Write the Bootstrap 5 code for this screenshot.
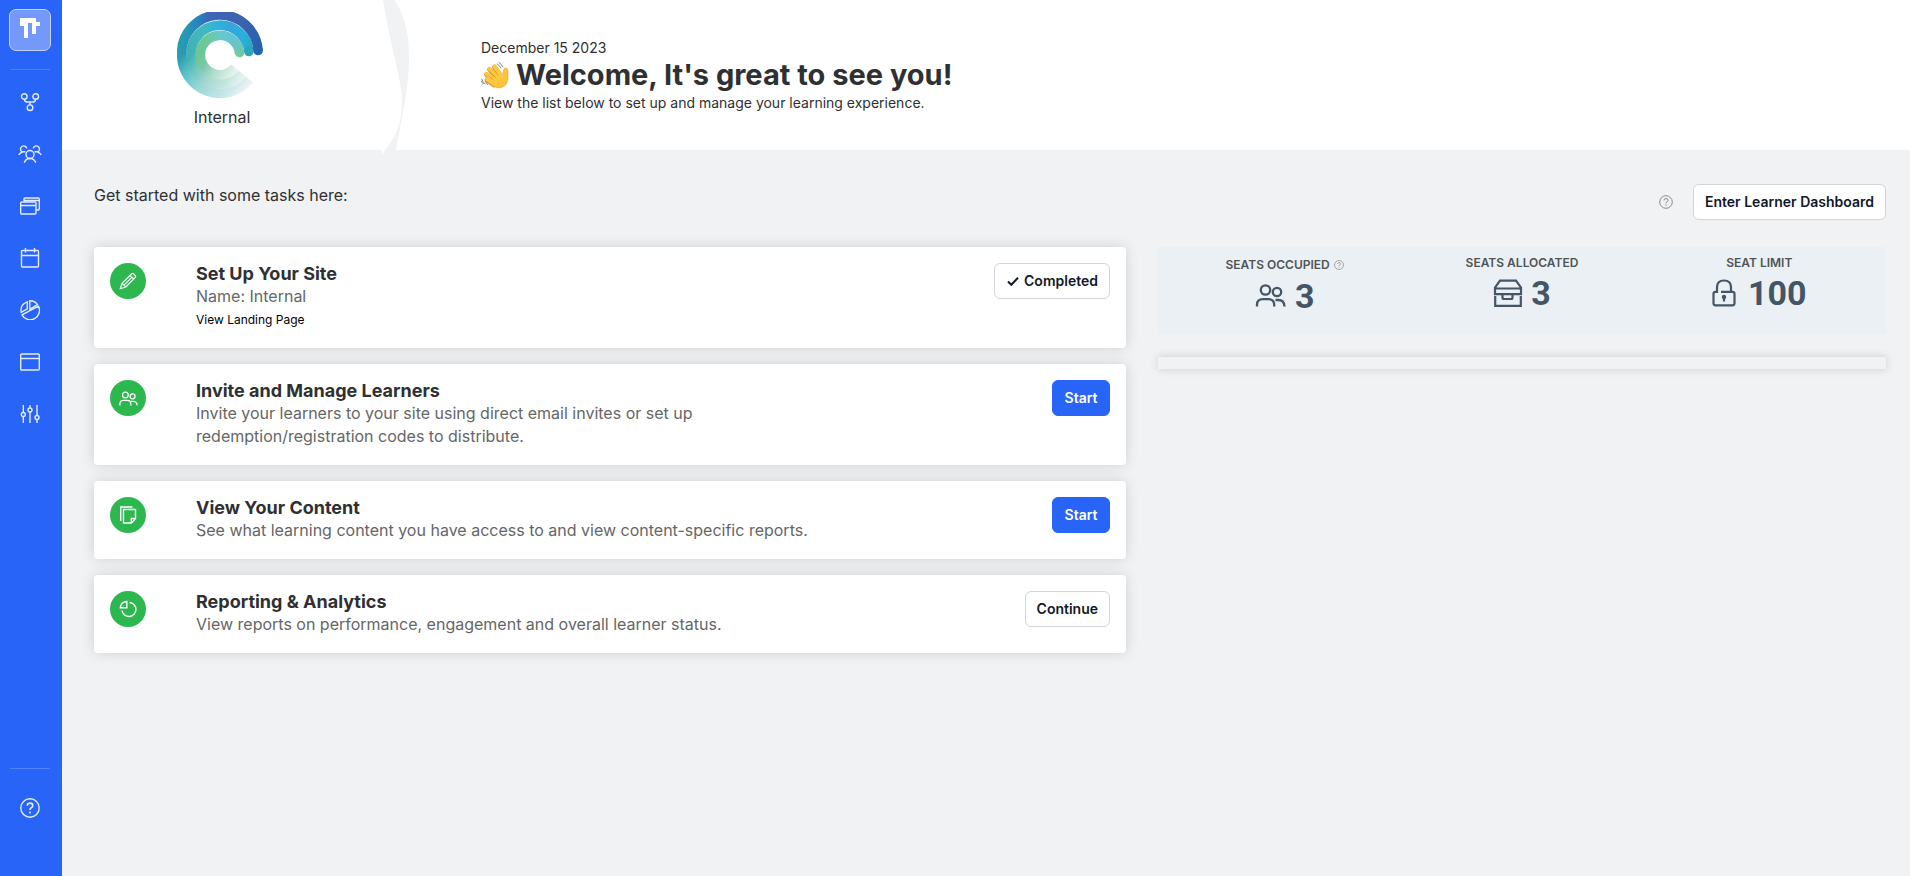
<!DOCTYPE html>
<html lang="en">
<head>
<meta charset="utf-8">
<meta name="viewport" content="width=device-width, initial-scale=1">
<title>Internal</title>
<link href="https://cdn.jsdelivr.net/npm/bootstrap@5.3.0/dist/css/bootstrap.min.css" rel="stylesheet">
<style>
  :root { --brand: #2864f8; --ink: #2f3032; --page: #f0f2f4; }
  body { background: var(--page); color: var(--ink); font-family: Inter, "Liberation Sans", sans-serif; }
  svg { display: block; flex: none; }
  .line-icon { fill: none; stroke: currentColor; stroke-width: 1.4; }
  .side-rail { width: 62px; background: var(--brand); padding: 9px 2px 42px 0; }
  .rail-rule { width: 40px; height: 1px; background: #5082fa; }
  .rail-link { color: #e4ecff; width: 40px; height: 52px; }
  .rail-top { padding-top: 6px; }
  .rail-bottom .rail-rule { margin-bottom: 13px; }
  .brand-tile { width: 42px; height: 42px; margin-bottom: 18px; padding-bottom: 4px; border: 1px solid #c3d3fd; border-radius: 7px; background: #7399fa; }
  .hero { height: 150px; }
  .hero-brand { width: 320px; padding-top: 12px; }
  .hero-name { margin-top: 7px; }
  .hero-copy { padding: 39px 0 0 71px; font-size: 14px; line-height: 17px; }
  .hero-copy h1 { font-size: 29px; line-height: 38px; font-weight: 700; gap: 6px; }
  .page-main { padding: 34px 24px 24px 32px; }
  .intro-bar { margin-bottom: 27px; }
  .intro { line-height: 23px; }
  .row-wide { --bs-gutter-x: 32px; }
  .btn-task { --bs-btn-padding-x: 11px; --bs-btn-padding-y: 0; --bs-btn-font-size: 14px; --bs-btn-font-weight: 600; --bs-btn-border-radius: 6px;
    --bs-btn-line-height: 34px; white-space: nowrap; min-width: 58px; }
  .btn-plain { --bs-btn-bg: #fff; --bs-btn-color: #111827; --bs-btn-border-color: #d1d5db; --bs-btn-hover-bg: #f9fafb; --bs-btn-hover-border-color: #d1d5db; }
  .btn-brand { --bs-btn-bg: var(--brand); --bs-btn-color: #fff; --bs-btn-border-color: var(--brand); --bs-btn-hover-bg: #1f55dc; --bs-btn-hover-color: #fff; }
  .task { border-radius: 4px; box-shadow: 0 0 14px rgba(0, 0, 0, .14); line-height: 23px; }
  .task-dot { width: 36px; height: 36px; background: #2cb84f; color: #fff; flex: none; }
  .task-copy { padding: 0 0 1px 50px; }
  .task-copy p { max-width: 680px; color: #666; }
  .task-copy.is-short p { max-width: 520px; }
  .task h2 { font-size: 18px; line-height: 22px; font-weight: 700; }
  .task-link { font-size: 12px; color: #000; }
  .seats { background: #eaf0f3; height: 87px; padding: 8px; }
  .seat-label { font-size: 12px; line-height: 16px; font-weight: 600; color: #505458; }
  .seat-label.has-hint { line-height: 19px; }
  .seat-count { color: #445565; font: 700 34px/44px Roboto, sans-serif; gap: 8px; }
  .seat-count.is-limit { gap: 12px; }
  .slim-panel { height: 12px; margin-top: 23px; box-shadow: 0 0 10px rgba(0, 0, 0, .16); }
  .hint { color: #85888c; background: none; }
</style>
</head>
<body>
<div class="d-flex min-vh-100">
  <nav class="side-rail d-flex flex-column align-items-center flex-shrink-0" aria-label="Main">
    <a href="#" class="brand-tile d-flex align-items-center justify-content-center" aria-label="Home">
      <svg width="20" height="20" viewBox="0 0 20 20" fill="#fff" shape-rendering="crispEdges"><path d="M0 0h16v4h4v4h-4v8h-4V5H8v15H4V8H0z"/></svg>
    </a>
    <div class="rail-rule"></div>
    <div class="rail-top">
      <a href="#" class="rail-link d-flex align-items-center justify-content-center" aria-label="Paths"><svg class="line-icon" width="20" height="20" viewBox="0 0 20 20"><circle cx="4.300" cy="4.500" r="2.800"/><circle cx="15.700" cy="4.500" r="2.800"/><circle cx="10" cy="15.700" r="2.800"/><path d="M4.500 7.300Q4.500 10 7 10h6q2.500 0 2.500-2.700M10 10v3"/></svg></a>
      <a href="#" class="rail-link d-flex align-items-center justify-content-center" aria-label="Groups"><svg class="line-icon" width="24" height="20" viewBox="0 0 24 20"><circle cx="12" cy="10.500" r="4"/><path d="M6.300 18.800q1.200-4.300 5.700-4.300t5.700 4.300M8.800 4.300A3.200 3.200 0 1 0 4 7.800M4.500 8.300Q2 8.500 .7 11M4 7.800h3.500M15.200 4.300A3.200 3.200 0 1 1 20 7.800M19.500 8.300q2.500.2 3.800 2.700M20 7.800h-3.500"/></svg></a>
      <a href="#" class="rail-link d-flex align-items-center justify-content-center" aria-label="Content"><svg class="line-icon" width="20" height="20" viewBox="0 0 20 20"><rect x=".7" y="6" width="15.300" height="12" rx="1"/><path d="M1 9.500h15M4 6V3q0-1 1-1h13.300q1 0 1 1v10q0 1-1 1H16M4 4.500h15"/></svg></a>
      <a href="#" class="rail-link d-flex align-items-center justify-content-center" aria-label="Calendar"><svg class="line-icon" width="20" height="20" viewBox="0 0 20 20"><rect x="1.500" y="2.500" width="17" height="16.500" rx="1"/><path d="M1.500 7.500h17M5.500 0v4.500M14.500 0v4.500"/></svg></a>
      <a href="#" class="rail-link d-flex align-items-center justify-content-center" aria-label="Reports"><svg class="line-icon" width="20" height="20" viewBox="0 0 20 20"><path d="M9.800 9.300V.8A9.200 9.200 0 0 1 17.500 4.600zM18.400 6.200A9.200 9.200 0 1 1 2 14.800zM7.300 1.800V8.800L1.200 12.300Q-.3 4.800 7.300 1.800z"/></svg></a>
      <a href="#" class="rail-link d-flex align-items-center justify-content-center" aria-label="Pages"><svg class="line-icon" width="20" height="20" viewBox="0 0 20 20"><rect x=".7" y="2" width="18.600" height="16" rx="1"/><path d="M1 6.500h18"/></svg></a>
      <a href="#" class="rail-link d-flex align-items-center justify-content-center" aria-label="Settings"><svg class="line-icon" width="20" height="20" viewBox="0 0 20 20"><circle cx="3.300" cy="10.500" r="2"/><circle cx="10" cy="6" r="2"/><circle cx="17" cy="13.500" r="2"/><path d="M3.300 1v7.500M3.300 12.500V19M10 1v3M10 8v11M17 1v10.500M17 15.500V19"/></svg></a>
    </div>
    <div class="rail-bottom mt-auto">
      <div class="rail-rule"></div>
      <a href="#" class="rail-link d-flex align-items-center justify-content-center" aria-label="Help"><svg class="line-icon" width="20" height="20" viewBox="0 0 20 20"><circle cx="10" cy="10" r="9.200"/><path d="M7.200 7.800q0-2.700 2.800-2.700t2.800 2.500q0 1.500-1.500 2.200T10 12M10 13.600v1.800" stroke-width="1.600"/></svg></a>
    </div>
  </nav>

  <div class="flex-grow-1">
    <header class="hero bg-white d-flex">
      <div class="hero-brand d-flex flex-column align-items-center">
        <svg class="me-1" width="86" height="86" viewBox="0 0 86 86" fill="none" stroke-width="9.700" role="img" aria-label="Internal logo">
          <defs>
            <linearGradient id="outerTop" gradientUnits="userSpaceOnUse" x1="0" y1="0" x2="86" y2="0"><stop offset="0" stop-color="#2a9eb0"/><stop offset=".14" stop-color="#2695b4"/><stop offset=".27" stop-color="#2580bf"/><stop offset=".36" stop-color="#3f66b5"/><stop offset=".75" stop-color="#3c62b0"/><stop offset="1" stop-color="#2463ad"/></linearGradient>
            <linearGradient id="midTop" gradientUnits="userSpaceOnUse" x1="9" y1="0" x2="77" y2="0"><stop offset="0" stop-color="#3fb0b8"/><stop offset=".25" stop-color="#43b9bd"/><stop offset=".45" stop-color="#2cb4de"/><stop offset=".65" stop-color="#3ba3d9"/><stop offset=".85" stop-color="#27b0de"/><stop offset="1" stop-color="#2aa6b8"/></linearGradient>
            <linearGradient id="innerTop" gradientUnits="userSpaceOnUse" x1="18" y1="0" x2="68" y2="0"><stop offset="0" stop-color="#6cc795"/><stop offset=".25" stop-color="#6cc99a"/><stop offset=".5" stop-color="#68c8cc"/><stop offset=".75" stop-color="#66c4d2"/><stop offset="1" stop-color="#72c8a6"/></linearGradient>
            <linearGradient id="outerLow" gradientUnits="userSpaceOnUse" x1="4" y1="43" x2="62" y2="92"><stop offset=".02" stop-color="#2a9eb0"/><stop offset=".22" stop-color="#5fc3ca"/><stop offset=".42" stop-color="#94d4d4"/><stop offset=".62" stop-color="#b4dfdf"/><stop offset=".78" stop-color="#c8e7ea"/><stop offset=".96" stop-color="#f0f5f8"/></linearGradient>
            <linearGradient id="midLow" gradientUnits="userSpaceOnUse" x1="12" y1="43" x2="66" y2="76"><stop offset=".02" stop-color="#3fb0b8"/><stop offset=".2" stop-color="#6cc6bd"/><stop offset=".45" stop-color="#a6d8cf"/><stop offset=".72" stop-color="#c2e6de"/><stop offset=".95" stop-color="#eff5f7"/></linearGradient>
            <linearGradient id="innerLow" gradientUnits="userSpaceOnUse" x1="20" y1="43" x2="60" y2="66"><stop offset=".05" stop-color="#6cc795"/><stop offset=".25" stop-color="#7cc9aa"/><stop offset=".5" stop-color="#b0dccc"/><stop offset=".75" stop-color="#d0ebe0"/><stop offset=".98" stop-color="#f0f8f6"/></linearGradient>
          </defs>
          <path stroke="url(#outerLow)" d="M4.800 43A38.200 38.200 0 0 0 72.300 67.600"/>
          <path stroke="url(#midLow)" d="M14 43A29 29 0 0 0 65.200 61.600"/>
          <path stroke="url(#innerLow)" d="M23.300 43A19.700 19.700 0 0 0 58.100 55.700"/>
          <path stroke="url(#outerTop)" d="M81.100 39A38.200 38.200 0 0 0 4.800 43.200"/>
          <path stroke="url(#midTop)" d="M71.900 40A29 29 0 0 0 14 43.200"/>
          <path stroke="url(#innerTop)" d="M62.600 41A19.700 19.700 0 0 0 23.300 43.200"/>
          <circle cx="81.100" cy="38.500" r="4.800" fill="#2463ad" stroke="none"/><circle cx="71.900" cy="39.500" r="4.800" fill="#2aa6b8" stroke="none"/><circle cx="62.600" cy="40.500" r="4.800" fill="#72c8a6" stroke="none"/>
        </svg>
        <div class="hero-name">Internal</div>
      </div>
      <svg width="28" height="155" viewBox="0 0 28 155" aria-hidden="true"><path fill="#f0f2f4" d="M1 0H13C24 20 27 35 27 58C27 90 19 120 14 150H3C16 136 20 118 20 102C20 80 8 45 1 0z"/><path fill="#fff" d="M0 149H4L0 155z"/></svg>
      <div class="hero-copy">
        <div>December 15 2023</div>
        <h1 class="d-flex align-items-center mb-0">
          <svg width="29" height="29" viewBox="0 0 29 29" fill="none" stroke-linecap="round" aria-hidden="true">
            <path d="M6 19L13 24M5.500 13.500L14 20M8.500 8.500L17 17M13.500 6L20 15" stroke="#e09a2c" stroke-width="4.800"/>
            <path d="M9.500 18.500L16 12.500 21 15Q22.500 12 22.700 9Q23.500 6 25.800 7.300Q27.500 8.500 26.800 13Q27.800 20 24.500 24Q19 29 13.500 25.500z" fill="#fcc33b" stroke="#e8a733" stroke-width=".7"/>
            <path d="M6.300 18.300L14 23.500M5.800 12.800L15 20M8.800 7.800L18 17M13.800 5.500L20.500 15" stroke="#fdc943" stroke-width="4"/>
            <path d="M8 15.500L12.500 19M9 11.500L14.500 16.500M12 8L17 14" stroke="#dc9427" stroke-width=".8"/>
            <path d="M18 1.500Q20.500 3 22 6M16.300 3Q18.800 4.500 20 7M.8 18Q1.500 21 4 23M2.500 23Q.8 21.500 .3 20M4.500 20.500L6.500 23.500" stroke="#7d8286" stroke-width="1"/>
          </svg>
          <span>Welcome, It's great to see you!</span>
        </h1>
        <div>View the list below to set up and manage your learning experience.</div>
      </div>
    </header>

    <main class="page-main">
      <div class="intro-bar d-flex justify-content-between">
        <div class="intro">Get started with some tasks here:</div>
        <div class="d-flex align-items-center">
          <button type="button" class="hint border-0 p-0 me-3" aria-label="About the learner dashboard"><svg class="line-icon" width="14" height="14" viewBox="0 0 20 20"><circle cx="10" cy="10" r="9"/><path d="M7.200 7.800q0-2.700 2.800-2.700t2.800 2.500q0 1.500-1.500 2.200T10 12M10 13.600v1.800"/></svg></button>
          <button type="button" class="btn btn-task btn-plain ms-1">Enter Learner Dashboard</button>
        </div>
      </div>
      <div class="row row-wide">
        <div class="col-7 d-flex flex-column gap-3">
          <section class="task bg-white d-flex p-3">
            <span class="task-dot rounded-circle d-flex align-items-center justify-content-center"><svg class="line-icon" width="18" height="18" viewBox="0 0 18 18"><path d="M1.300 16.700L3 11.200 12.700 1.700Q13.500 1 14.300 1.700L16.300 3.700Q17 4.500 16.300 5.300L6.800 15zM3 11.200L6.800 15M11 3.300L14.700 7M5 13.200L13 5.200" stroke-width="1.200"/></svg></span>
            <div class="task-copy">
              <h2 class="mb-0">Set Up Your Site</h2>
              <p class="mb-0">Name: Internal</p>
              <a href="#" class="task-link text-decoration-none d-block">View Landing Page</a>
            </div>
            <button type="button" class="btn btn-task btn-plain ms-auto align-self-start d-flex align-items-center gap-1"><svg class="line-icon" width="14" height="14" viewBox="0 0 14 14"><path d="M2 7.500L5.300 10.800 12 3.800" stroke-width="2"/></svg>Completed</button>
          </section>
          <section class="task bg-white d-flex p-3">
            <span class="task-dot rounded-circle d-flex align-items-center justify-content-center"><svg class="line-icon" width="19" height="15" viewBox="0 0 30 24"><g stroke-width="2"><circle cx="10" cy="6.500" r="4.600"/><circle cx="21.500" cy="8.500" r="4"/><path d="M1.200 23v-2q0-6 6-6h5.600q6 0 6 6v2M19 16.500h3.500q6 0 6.300 6.500"/></g></svg></span>
            <div class="task-copy is-short">
              <h2 class="mb-0">Invite and Manage Learners</h2>
              <p class="mb-0">Invite your learners to your site using direct email invites or set up redemption/registration codes to distribute.</p>
            </div>
            <button type="button" class="btn btn-task btn-brand ms-auto align-self-start">Start</button>
          </section>
          <section class="task bg-white d-flex p-3">
            <span class="task-dot rounded-circle d-flex align-items-center justify-content-center"><svg class="line-icon" width="18" height="18" viewBox="0 0 18 18"><path d="M4.500 3.500h12v9l-4 4.500h-8zM12.300 17v-4.500h4.200M1.700 15V1H13.500"/></svg></span>
            <div class="task-copy">
              <h2 class="mb-0">View Your Content</h2>
              <p class="mb-0">See what learning content you have access to and view content-specific reports.</p>
            </div>
            <button type="button" class="btn btn-task btn-brand ms-auto align-self-start">Start</button>
          </section>
          <section class="task bg-white d-flex p-3">
            <span class="task-dot rounded-circle d-flex align-items-center justify-content-center"><svg class="line-icon" width="18" height="18" viewBox="0 0 18 18"><path d="M7.800 1.500V7.800H1.300Q1.700 2.200 7.800 1.500zM10.500 2.500A7 7 0 1 1 3 10.500"/></svg></span>
            <div class="task-copy">
              <h2 class="mb-0">Reporting &amp; Analytics</h2>
              <p class="mb-0">View reports on performance, engagement and overall learner status.</p>
            </div>
            <button type="button" class="btn btn-task btn-plain ms-auto align-self-start">Continue</button>
          </section>
        </div>
        <div class="col-5">
          <div class="seats row g-0">
            <div class="col">
              <div class="seat-label has-hint d-flex align-items-center justify-content-center gap-1">SEATS OCCUPIED
                <button type="button" class="hint border-0 p-0" aria-label="About seats occupied"><svg class="line-icon" width="10" height="10" viewBox="0 0 20 20"><circle cx="10" cy="10" r="9"/><path d="M7.200 7.800q0-2.700 2.800-2.700t2.800 2.500q0 1.500-1.500 2.200T10 12M10 13.600v1.800"/></svg></button>
              </div>
              <div class="seat-count d-flex align-items-center justify-content-center">
                <svg class="line-icon" width="32" height="24" viewBox="0 0 32 24"><g stroke-width="2.300"><circle cx="10.500" cy="6" r="4.700"/><circle cx="22" cy="8" r="4.200"/><path d="M2 22.500v-1.800q0-5.500 6-5.500h5.200q6 0 6 5.500v1.800M20.500 16h2.700q6 0 6.300 6.500"/></g></svg>
                <span>3</span>
              </div>
            </div>
            <div class="col">
              <div class="seat-label text-center">SEATS ALLOCATED</div>
              <div class="seat-count d-flex align-items-center justify-content-center">
                <svg class="line-icon" width="30" height="28" viewBox="0 0 30 28"><path d="M2 15.200V8.500L7 1.700H23L28 8.500V15.200zM1 9.500H29M2.200 17V26.800H27.800V17M9.500 15.500V18.500Q9.500 20 11 20h7q1.500 0 1.500-1.500V15.500" stroke-width="2.200"/></svg>
                <span>3</span>
              </div>
            </div>
            <div class="col">
              <div class="seat-label text-center">SEAT LIMIT</div>
              <div class="seat-count is-limit d-flex align-items-center justify-content-center">
                <svg class="line-icon" width="24" height="28" viewBox="0 0 24 28"><path d="M9 12.800H20.500q2 0 2 2v9.500q0 2-2 2h-17q-2 0-2-2v-9.500q0-2 2-2H5V8.500Q5 1.500 12 1.500T19 8.500V12" stroke-width="2.200"/><circle cx="12" cy="18" r="2.200" fill="currentColor" stroke="none"/><path d="M12 18v4.500" stroke-width="2.200"/></svg>
                <span>100</span>
              </div>
            </div>
          </div>
          <div class="slim-panel"></div>
        </div>
      </div>
    </main>
  </div>
</div>
<script src="https://cdn.jsdelivr.net/npm/bootstrap@5.3.0/dist/js/bootstrap.bundle.min.js"></script>
</body>
</html>
